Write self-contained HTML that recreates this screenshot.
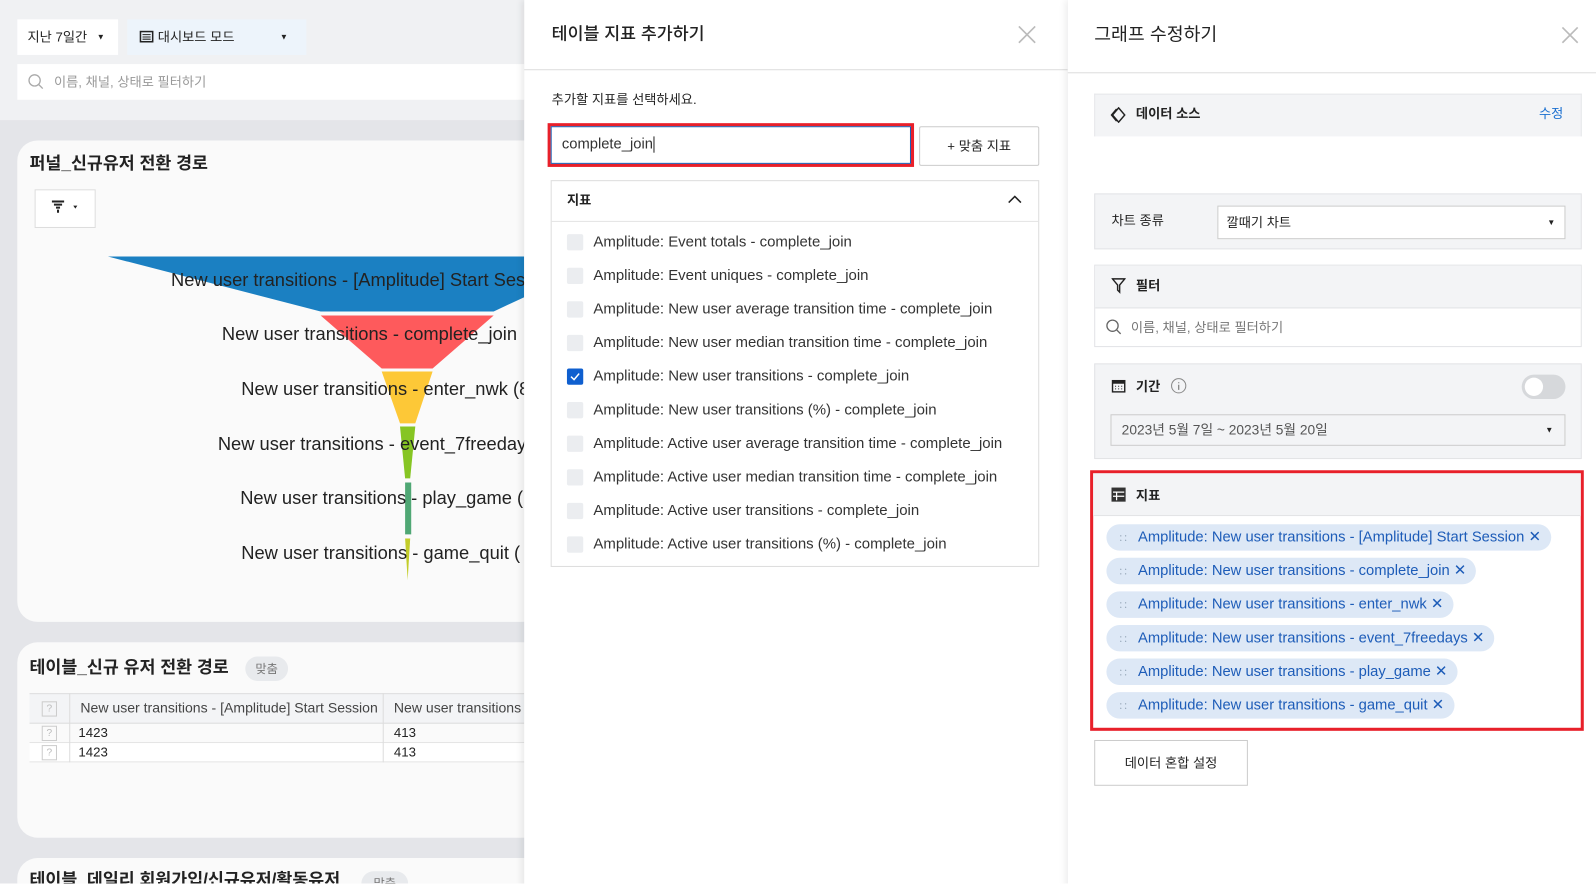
<!DOCTYPE html>
<html><head><meta charset="utf-8">
<style>
*{box-sizing:border-box;margin:0;padding:0}
body{width:1596px;height:884px;overflow:hidden;position:relative;background:#fff;font-family:"Liberation Sans","Noto Sans CJK KR",sans-serif;color:#222}
#w{position:absolute;left:0;top:0;width:1568px;height:868px;overflow:hidden;transform:scale(1.01786);transform-origin:0 0;background:#e4e5e9}
.abs{position:absolute}
.t{white-space:nowrap}
.li{position:relative;height:33px}
.li i{position:absolute;left:0;top:1px;width:16px;height:16px;background:#ebedf0;border-radius:2px}
.li span{position:absolute;left:26px;top:0;line-height:18px;white-space:nowrap}
.chip{height:33px}
.chip>span{display:inline-block;white-space:nowrap;height:26px;line-height:26px;border-radius:13px;background:#dde8f6;padding:0 10px 0 12px}
.chip b{color:#9ab;font-size:9px;margin-right:10px;font-weight:normal}
</style></head><body><div id="w">
<div class="abs" style="left:0;top:0;width:515px;height:118px;background:#f0f1f3"></div>
<div class="abs t" style="left:17px;top:19px;width:99px;height:35px;background:#fff;font-size:13px;line-height:35px;padding-left:10px">지난 7일간<span style="position:absolute;left:78px;top:0;font-size:8px">▼</span></div>
<div class="abs t" style="left:125px;top:19px;width:176px;height:35px;background:#edf4fb;font-size:13px;line-height:35px;padding-left:12px">
<svg width="14" height="12" style="vertical-align:-1px;margin-right:4px"><rect x="1" y="1" width="12" height="10" fill="none" stroke="#222" stroke-width="1.5"/><path d="M3 4h8M3 6.3h8M3 8.5h8" stroke="#222"/></svg>대시보드 모드<span style="position:absolute;left:150px;top:0;font-size:8px">▼</span></div>
<div class="abs t" style="left:17px;top:63px;width:498px;height:35px;background:#fff;font-size:13px;line-height:35px;color:#999;padding-left:36px">이름, 채널, 상태로 필터하기
<svg class="abs" style="left:10px;top:9px" width="16" height="16"><circle cx="7" cy="7" r="5.5" fill="none" stroke="#aaa" stroke-width="1.3"/><path d="M11 11l4 4" stroke="#aaa" stroke-width="1.3"/></svg></div>

<div class="abs" style="left:17px;top:138px;width:540px;height:473px;background:#fafafa;border-radius:20px"></div>
<div class="abs t" style="left:29px;top:149px;font-size:17px;font-weight:bold;line-height:24px">퍼널_신규유저 전환 경로</div>
<div class="abs" style="left:34px;top:186px;width:60px;height:38px;border:1px solid #ddd;background:#fff">
<svg class="abs" style="left:15px;top:9px" width="30" height="16"><path d="M1 2h12M3 5h8M5 8h4" stroke="#222" stroke-width="2"/><path d="M6 10h2v3h-2z" fill="#222"/><path d="M22 6l4 0-2 3z" fill="#222"/></svg></div>
<svg class="abs" style="left:0;top:0" width="515" height="600">
<polygon points="106,252 515,252 515,292 485,306 315,306" fill="#1b80c2"/>
<polygon points="315,310 485,310 425,362 375,362" fill="#fe5a5c"/>
<polygon points="375,365 425,365 408,416 393,416" fill="#fdc837"/>
<polygon points="393,419 408,419 403,470 398,470" fill="#86c523"/>
<polygon points="398,474 404,474 404,525 398,525" fill="#4fa774"/>
<polygon points="398,529 403,529 400.5,570" fill="#c3cd2a"/>
<g font-family="Liberation Sans, sans-serif" font-size="18" fill="#222">
<text x="168" y="281">New user transitions - [Amplitude] Start Session</text>
<text x="218" y="334">New user transitions - complete_join</text>
<text x="237" y="388">New user transitions - enter_nwk (8</text>
<text x="214" y="442">New user transitions - event_7freedays</text>
<text x="236" y="495">New user transitions - play_game (</text>
<text x="237" y="549">New user transitions - game_quit (</text>
</g></svg>

<div class="abs" style="left:17px;top:631px;width:540px;height:192px;background:#fafafa;border-radius:20px"></div>
<div class="abs t" style="left:29px;top:644px;font-size:17px;font-weight:bold;line-height:24px">테이블_신규 유저 전환 경로</div>
<div class="abs t" style="left:241px;top:645px;width:42px;height:24px;border-radius:12px;background:#e8eaed;font-size:12px;color:#777;text-align:center;line-height:24px">맞춤</div>
<div class="abs" style="left:29px;top:681px;width:486px;height:68px;font-size:13px">
<div class="abs" style="left:0;top:0;width:486px;height:30px;background:#f3f4f6;border-top:1px solid #ddd;border-bottom:1px solid #ddd"></div>
<div class="abs" style="left:0;top:48px;width:486px;height:20px;background:#fff;border-top:1px solid #e5e5e5;border-bottom:1px solid #e5e5e5"></div>
<div class="abs" style="left:39px;top:0;width:1px;height:68px;background:#ddd"></div>
<div class="abs" style="left:347px;top:0;width:1px;height:68px;background:#ddd"></div>
<div class="abs t" style="left:50px;top:6px;line-height:18px;color:#444;font-size:13.8px">New user transitions - [Amplitude] Start Session</div>
<div class="abs t" style="left:358px;top:6px;line-height:18px;color:#444;font-size:13.8px">New user transitions</div>
<div class="abs t" style="left:48px;top:31px">1423</div><div class="abs t" style="left:358px;top:31px">413</div>
<div class="abs t" style="left:48px;top:50px">1423</div><div class="abs t" style="left:358px;top:50px">413</div>
<div class="abs" style="left:12px;top:8px;width:15px;height:15px;border:1px solid #ccc;font-size:10px;color:#bbb;text-align:center;line-height:13px">?</div>
<div class="abs" style="left:12px;top:32px;width:15px;height:15px;border:1px solid #ccc;font-size:10px;color:#bbb;text-align:center;line-height:13px">?</div>
<div class="abs" style="left:12px;top:51px;width:15px;height:15px;border:1px solid #ccc;font-size:10px;color:#bbb;text-align:center;line-height:13px">?</div>
</div>
<div class="abs" style="left:17px;top:843px;width:540px;height:60px;background:#fafafa;border-radius:20px"></div>
<div class="abs t" style="left:29px;top:853px;font-size:17px;font-weight:bold;line-height:24px">테이블_데일리 회원가입/신규유저/활동유저</div>
<div class="abs t" style="left:355px;top:856px;width:46px;height:24px;border-radius:12px;background:#e8eaed;font-size:12px;color:#777;text-align:center;line-height:24px">맞춤</div>

<div class="abs" style="left:515px;top:0;width:534px;height:884px;background:#fff;box-shadow:-3px 0 6px rgba(0,0,0,.08)"></div>
<div class="abs t" style="left:542px;top:22px;font-size:17px;line-height:24px;font-weight:500">테이블 지표 추가하기</div>
<svg class="abs" style="left:1000px;top:25px" width="18" height="18"><path d="M1 1l16 16M17 1L1 17" stroke="#bbb" stroke-width="1.6"/></svg>
<div class="abs" style="left:515px;top:68px;width:534px;height:1px;background:#ddd"></div>
<div class="abs t" style="left:542px;top:89px;font-size:13px;line-height:18px">추가할 지표를 선택하세요.</div>
<div class="abs t" style="left:538px;top:121px;width:360px;height:43px;border:3px solid #e8202a;font-size:14.5px;line-height:37px;padding-left:11px;color:#333">complete_join<span style="border-left:1px solid #222;margin-left:1px"></span>
<div class="abs" style="left:0;top:0;right:0;bottom:0;border:1px solid #1a5fb4"></div></div>
<div class="abs t" style="left:903px;top:124px;width:118px;height:39px;border:1px solid #ccc;border-radius:2px;font-size:13px;line-height:37px;text-align:center">+ 맞춤 지표</div>
<div class="abs" style="left:541px;top:177px;width:480px;height:380px;border:1px solid #ddd"></div>
<div class="abs" style="left:542px;top:217px;width:478px;height:1px;background:#e3e3e3"></div>
<div class="abs t" style="left:557px;top:188px;font-size:13px;line-height:18px;font-weight:bold">지표</div>
<svg class="abs" style="left:990px;top:192px" width="14" height="9"><path d="M1 7l6-6 6 6" fill="none" stroke="#222" stroke-width="1.5"/></svg>
<div class="abs" style="left:557px;top:229px;font-size:14.7px;color:#333">
<div class="li"><i></i><span>Amplitude: Event totals - complete_join</span></div>
<div class="li"><i></i><span>Amplitude: Event uniques - complete_join</span></div>
<div class="li"><i></i><span>Amplitude: New user average transition time - complete_join</span></div>
<div class="li"><i></i><span>Amplitude: New user median transition time - complete_join</span></div>
<div class="li"><i style="background:#0f5fcf"></i><svg class="abs" style="left:3px;top:5px" width="10" height="8"><path d="M1 4l3 3 5-6" fill="none" stroke="#fff" stroke-width="1.5"/></svg><span>Amplitude: New user transitions - complete_join</span></div>
<div class="li"><i></i><span>Amplitude: New user transitions (%) - complete_join</span></div>
<div class="li"><i></i><span>Amplitude: Active user average transition time - complete_join</span></div>
<div class="li"><i></i><span>Amplitude: Active user median transition time - complete_join</span></div>
<div class="li"><i></i><span>Amplitude: Active user transitions - complete_join</span></div>
<div class="li"><i></i><span>Amplitude: Active user transitions (%) - complete_join</span></div>
</div>

<div class="abs" style="left:1049px;top:0;width:547px;height:884px;background:#fff;box-shadow:-3px 0 6px rgba(0,0,0,.06)"></div>
<div class="abs t" style="left:1075px;top:22px;font-size:18px;line-height:24px">그래프 수정하기</div>
<svg class="abs" style="left:1534px;top:26px" width="17" height="17"><path d="M1 1l15 15M16 1L1 16" stroke="#bbb" stroke-width="1.6"/></svg>
<div class="abs" style="left:1049px;top:71px;width:547px;height:1px;background:#ddd"></div>

<div class="abs" style="left:1075px;top:92px;width:479px;height:42px;background:#f3f4f6;border:1px solid #e6e7ea;border-bottom:none"></div>
<svg class="abs" style="left:1091px;top:105px" width="16" height="16"><path d="M8 1l6 7-6 7-6-7z M6 2L1 8l5 6" fill="none" stroke="#222" stroke-width="1.4"/></svg>
<div class="abs t" style="left:1116px;top:103px;font-size:13px;line-height:18px;font-weight:bold">데이터 소스</div>
<div class="abs t" style="left:1512px;top:103px;font-size:13px;line-height:18px;color:#1a6fd0">수정</div>

<div class="abs" style="left:1075px;top:190px;width:479px;height:55px;background:#f3f4f6;border:1px solid #e2e3e6"></div>
<div class="abs t" style="left:1092px;top:208px;font-size:13px;line-height:18px">차트 종류</div>
<div class="abs t" style="left:1196px;top:202px;width:342px;height:33px;background:#fff;border:1px solid #ccc;font-size:13px;line-height:31px;padding-left:8px">깔때기 차트<span class="abs" style="right:9px;top:0;font-size:8px">▼</span></div>

<div class="abs" style="left:1075px;top:260px;width:479px;height:81px;background:#fff;border:1px solid #e2e3e6"></div>
<div class="abs" style="left:1076px;top:261px;width:477px;height:42px;background:#f3f4f6;border-bottom:1px solid #e2e3e6"></div>
<svg class="abs" style="left:1092px;top:273px" width="14" height="16"><path d="M1 1h12l-5 6v7l-2-2V7z" fill="none" stroke="#222" stroke-width="1.4"/></svg>
<div class="abs t" style="left:1116px;top:272px;font-size:13px;line-height:18px;font-weight:bold">필터</div>
<svg class="abs" style="left:1086px;top:313px" width="16" height="16"><circle cx="7" cy="7" r="5.5" fill="none" stroke="#666" stroke-width="1.3"/><path d="M11 11l4 4" stroke="#666" stroke-width="1.3"/></svg>
<div class="abs t" style="left:1111px;top:313px;font-size:13px;line-height:18px;color:#777">이름, 채널, 상태로 필터하기</div>

<div class="abs" style="left:1075px;top:357px;width:479px;height:94px;background:#f3f4f6;border:1px solid #e2e3e6"></div>
<svg class="abs" style="left:1092px;top:372px" width="14" height="14"><rect x="1" y="2" width="12" height="11" fill="none" stroke="#222" stroke-width="1.4"/><rect x="1" y="2" width="12" height="3" fill="#222"/><path d="M3.5 7.5h1M6.5 7.5h1M9.5 7.5h1M3.5 10h1M6.5 10h1M9.5 10h1" stroke="#222"/></svg>
<div class="abs t" style="left:1116px;top:371px;font-size:13px;line-height:18px;font-weight:bold">기간</div>
<svg class="abs" style="left:1150px;top:371px" width="16" height="16"><circle cx="8" cy="8" r="7" fill="none" stroke="#888"/><path d="M8 7v5M8 4.5v1" stroke="#888" stroke-width="1.3"/></svg>
<div class="abs" style="left:1495px;top:368px;width:43px;height:24px;border-radius:12px;background:#d6d8db"></div>
<div class="abs" style="left:1498px;top:371px;width:18px;height:18px;border-radius:9px;background:#fff"></div>
<div class="abs t" style="left:1091px;top:407px;width:447px;height:31px;border:1px solid #ccc;background:#f3f4f6;font-size:13.5px;line-height:29px;padding-left:10px;color:#555">2023년 5월 7일 ~ 2023년 5월 20일<span class="abs" style="right:11px;top:0;font-size:8px;color:#222">▼</span></div>

<div class="abs" style="left:1071px;top:462px;width:485px;height:256px;border:3px solid #e8202a"></div>
<div class="abs" style="left:1074px;top:465px;width:479px;height:42px;background:#f3f4f6;border-bottom:1px solid #e2e3e6"></div>
<svg class="abs" style="left:1092px;top:479px" width="14" height="14"><rect x="0" y="0" width="14" height="14" fill="#333"/><path d="M1.5 4.5h11M1.5 8.5h11M5 4.5v8" stroke="#fff" stroke-width="1.2"/></svg>
<div class="abs t" style="left:1116px;top:478px;font-size:13px;line-height:18px;font-weight:bold">지표</div>
<div class="abs" style="left:1087px;top:515px;font-size:14.5px;color:#1d5cb8">
<div class="chip"><span><b>∷</b>Amplitude: New user transitions - [Amplitude] Start Session ✕</span></div>
<div class="chip"><span><b>∷</b>Amplitude: New user transitions - complete_join ✕</span></div>
<div class="chip"><span><b>∷</b>Amplitude: New user transitions - enter_nwk ✕</span></div>
<div class="chip"><span><b>∷</b>Amplitude: New user transitions - event_7freedays ✕</span></div>
<div class="chip"><span><b>∷</b>Amplitude: New user transitions - play_game ✕</span></div>
<div class="chip"><span><b>∷</b>Amplitude: New user transitions - game_quit ✕</span></div>
</div>
<div class="abs t" style="left:1075px;top:727px;width:151px;height:45px;border:1px solid #ccc;font-size:13px;line-height:43px;text-align:center">데이터 혼합 설정</div>
</div></body></html>
